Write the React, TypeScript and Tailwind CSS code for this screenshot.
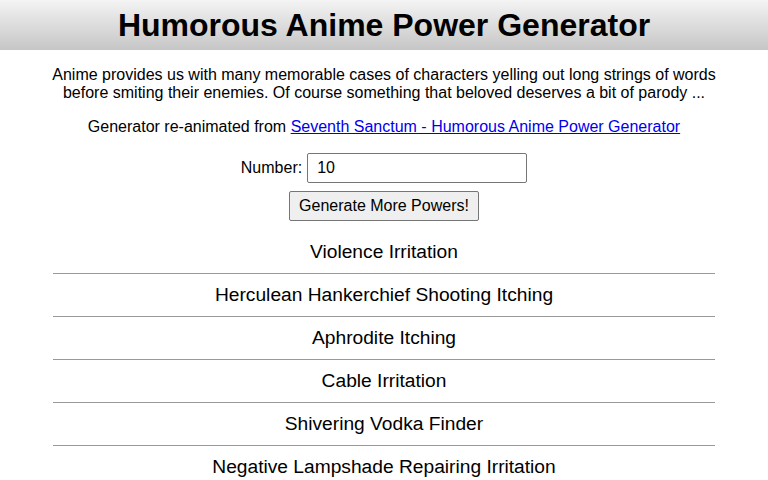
import { useState } from 'react';

const POWERS = [
  'Violence Irritation',
  'Herculean Hankerchief Shooting Itching',
  'Aphrodite Itching',
  'Cable Irritation',
  'Shivering Vodka Finder',
  'Negative Lampshade Repairing Irritation',
];

export default function App() {
  const [count, setCount] = useState('10');

  return (
    <div className="min-h-screen bg-white text-black font-['Liberation_Sans',Arial,sans-serif]">
      <header className="h-[50px] flex items-center justify-center bg-gradient-to-b from-[#f4f4f4] to-[#c6c6c6]">
        <h1 className="text-[32px] font-bold leading-none">Humorous Anime Power Generator</h1>
      </header>

      <main className="w-[690px] mx-auto text-center text-[16px]">
        <p className="mt-4 leading-[18px]">
          Anime provides us with many memorable cases of characters yelling out long strings of words
          before smiting their enemies. Of course something that beloved deserves a bit of parody ...
        </p>
        <p className="mt-4 leading-[18px]">
          Generator re-animated from{' '}
          <a href="#" className="text-[#0000ee] underline">
            Seventh Sanctum - Humorous Anime Power Generator
          </a>
        </p>

        <div className="mt-[17px] flex items-center justify-center gap-[5px]">
          <label htmlFor="count">Number:</label>
          <input
            id="count"
            value={count}
            onChange={(e) => setCount(e.target.value)}
            className="w-[220px] h-[30px] px-[9px] border border-[#767676] rounded-[2px] outline-none"
          />
        </div>
        <button
          type="button"
          className="mt-2 h-[30px] w-[190px] bg-[#efefef] border border-[#767676] rounded-[2px]"
        >
          Generate More Powers!
        </button>

        <ul className="mt-[10px] w-[662px] mx-auto">
          {POWERS.map((p) => (
            <li key={p} className="py-[10px] text-[19.2px] leading-[22px] border-b border-[#999]">
              {p}
            </li>
          ))}
        </ul>
      </main>
    </div>
  );
}
